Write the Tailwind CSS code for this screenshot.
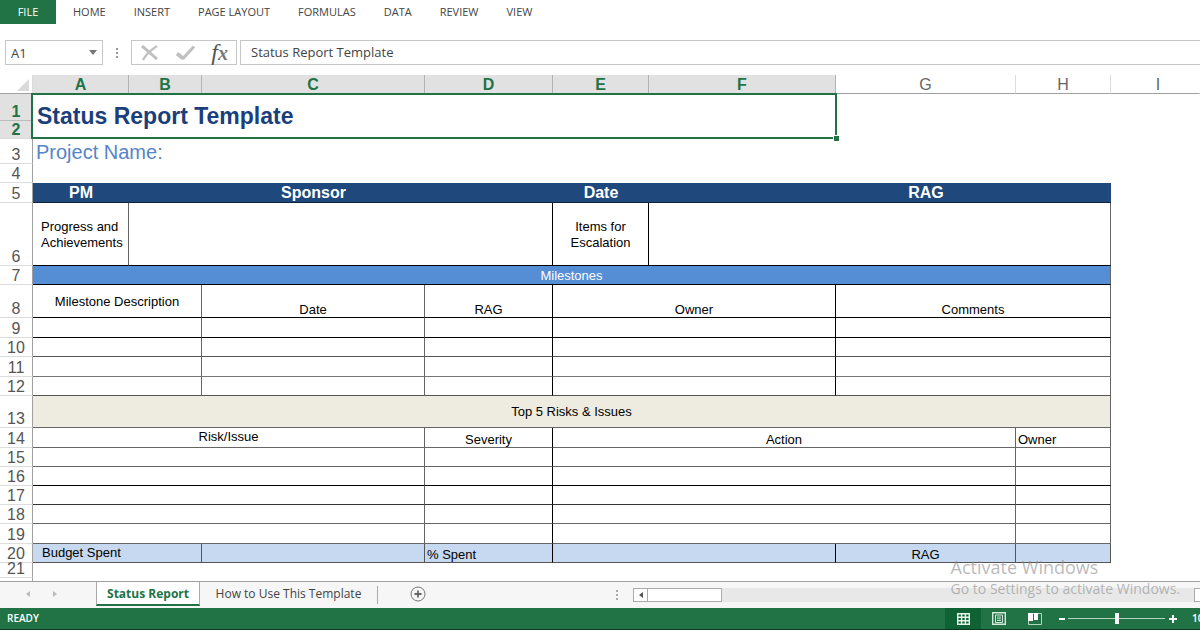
<!DOCTYPE html>
<html lang="en">
<head>
    <title>Status Report Template</title>
    <meta charset="UTF-8">
    <meta name="viewport" content="width=device-width, initial-scale=1.0">
    <script src="https://cdn.jsdelivr.net/npm/@tailwindcss/browser@4"></script>
</head>
<body class="relative flex h-screen flex-col overflow-hidden bg-white font-['Open_Sans',sans-serif] text-[#444]">

<!-- Ribbon tabs -->
<nav class="flex h-6 shrink-0 items-center gap-7 overflow-hidden text-[11px] whitespace-nowrap">
    <button class="-mr-[11px] h-6 w-14 shrink-0 bg-[#217346] text-white">FILE</button>
    <button>HOME</button>
    <button>INSERT</button>
    <button>PAGE LAYOUT</button>
    <button>FORMULAS</button>
    <button>DATA</button>
    <button>REVIEW</button>
    <button>VIEW</button>
    <a href="#" class="-mr-[34px] ml-auto pb-1">Sign in</a>
</nav>

<!-- Name box and formula bar -->
<div class="mt-4 mb-[10px] flex h-[25px] shrink-0 items-stretch pl-[5px]">
    <div class="relative flex w-[98px] border border-[#c6c6c6]">
        <select aria-label="Name box" class="w-full appearance-none bg-white pl-[5px] text-[13px] leading-5 outline-none">
            <option>A1</option>
        </select>
        <svg class="pointer-events-none absolute top-[9px] right-[5px]" width="8" height="5" viewBox="0 0 8 5"><path d="M0 0h8L4 5z" fill="#777"/></svg>
    </div>
    <div class="flex w-7 items-center justify-center">
        <svg width="2" height="12" viewBox="0 0 2 12" fill="#999"><path d="M0 1h2v2H0zM0 5h2v2H0zM0 9h2v2H0z"/></svg>
    </div>
    <div class="flex w-[106px] items-center justify-between border border-[#c6c6c6] pr-[8px] pl-[9px]">
        <button aria-label="Cancel">
            <svg width="18" height="16" viewBox="0 0 18 16" fill="none" stroke="#c0c0c0"><path d="M1 1c5 4 10 9 15 13" stroke-width="3"/><path d="M16 1C10 5 5 9 2 15" stroke-width="2.2"/></svg>
        </button>
        <button aria-label="Enter">
            <svg width="19" height="16" viewBox="0 0 19 16" fill="none" stroke="#c0c0c0"><path d="M1 8.500l6 5" stroke-width="4"/><path d="M6.500 14L18 1.500" stroke-width="3"/></svg>
        </button>
        <button aria-label="Insert function" class="font-['Liberation_Serif',serif] text-2xl leading-5 text-[#555] italic">f<span class="text-xl leading-5 font-bold text-[#777]">x</span></button>
    </div>
    <input aria-label="Formula bar" value="Status Report Template" class="ml-[3px] min-w-0 flex-1 border border-r-0 border-[#c6c6c6] pt-px pl-[10px] text-[13px] outline-none">
</div>

<!-- Worksheet -->
<main class="min-h-0 flex-1 overflow-hidden">
    <table class="w-full table-fixed border-separate border-spacing-0 font-['Liberation_Sans',sans-serif] text-[13px] leading-[14px] text-black [&_tbody_th]:border-r [&_tbody_th]:border-b [&_tbody_th]:border-r-[#a0a0a0] [&_tbody_th]:border-b-[#dcdcdc] [&_tbody_th]:pb-[2px] [&_tbody_th]:align-bottom [&_tbody_th]:text-base [&_tbody_th]:leading-3">
        <colgroup>
            <col class="w-[33px]">
            <col class="w-[96px]">
            <col class="w-[73px]">
            <col class="w-[223px]">
            <col class="w-[128px]">
            <col class="w-[96px]">
            <col class="w-[187px]">
            <col class="w-[180px]">
            <col class="w-[95px]">
            <col>
        </colgroup>
        <thead>
        <tr class="h-[19px] text-base leading-4 [&>th]:border-r [&>th]:border-b [&>th]:border-b-[#a0a0a0] [&>th]:pt-[2px]">
            <th class="border-r-[#dcdcdc]"><svg class="mr-[3px] ml-auto block" width="12" height="12" viewBox="0 0 12 12"><path d="M12 0v12H0z" fill="#dadada"/></svg></th>
            <th class="border-r-[#b4b4b4] bg-[#e1e1e1] text-[#217346]">A</th>
            <th class="border-r-[#b4b4b4] bg-[#e1e1e1] text-[#217346]">B</th>
            <th class="border-r-[#b4b4b4] bg-[#e1e1e1] text-[#217346]">C</th>
            <th class="border-r-[#b4b4b4] bg-[#e1e1e1] text-[#217346]">D</th>
            <th class="border-r-[#b4b4b4] bg-[#e1e1e1] text-[#217346]">E</th>
            <th class="border-r-[#b4b4b4] bg-[#e1e1e1] text-[#217346]">F</th>
            <th class="border-r-[#dcdcdc] font-normal text-[#666]">G</th>
            <th class="border-r-[#dcdcdc] font-normal text-[#666]">H</th>
            <th class="border-r-transparent pl-[6px] font-normal text-[#666]">I</th>
        </tr>
        </thead>
        <tbody class="[&_th]:font-normal [&_th]:text-[#555]">
        <tr class="h-[27px]">
            <th class="border-b-[#bbb]! bg-[#e1e1e1] font-bold! text-[#217346]!">1</th>
            <td colspan="6" rowspan="2" class="relative pb-[2px] pl-1 text-[23px] leading-7 font-bold text-[#1a3f7c]">
                Status Report Template
                <!-- selection frame and fill handle -->
                <span class="absolute -top-px -right-px bottom-0 -left-[2px] border-2 border-[#217346]"></span>
                <span class="absolute -right-[3px] -bottom-[2px] size-[6px] border-t border-l border-white bg-[#217346]"></span>
            </td>
            <td colspan="3"></td>
        </tr>
        <tr class="h-[18px]">
            <th class="bg-[#e1e1e1] font-bold! text-[#217346]!">2</th>
            <td colspan="3"></td>
        </tr>
        <tr class="h-[25px]">
            <th>3</th>
            <td colspan="9" class="pl-[3px] text-xl leading-6 text-[#5585c9]">Project Name:</td>
        </tr>
        <tr class="h-[19px]">
            <th>4</th>
            <td colspan="9"></td>
        </tr>
        <tr class="h-5 text-center text-base leading-4 font-bold text-white [&>td]:border-b [&>td]:border-[#10243f] [&>td]:bg-[#1f497d]">
            <th>5</th>
            <td>PM</td>
            <td></td>
            <td>Sponsor</td>
            <td></td>
            <td>Date</td>
            <td></td>
            <td>RAG</td>
            <td></td>
        </tr>
        <tr class="h-[63px] leading-4 [&>td]:border-r [&>td]:border-b [&>td]:border-black [&>td]:pt-[2px]">
            <th>6</th>
            <td class="border-r-[#666]! pl-2">Progress and Achievements</td>
            <td colspan="3"></td>
            <td class="px-3 text-center">Items for Escalation</td>
            <td colspan="3" class="border-r-[#666]!"></td>
        </tr>
        <tr class="h-[19px]">
            <th>7</th>
            <td colspan="8" class="border-r border-b border-r-[#666] border-b-black bg-[#558ed5] pt-px text-center text-white">Milestones</td>
        </tr>
        <tr class="h-[33px] text-center [&>td]:border-r [&>td]:border-b [&>td]:border-black [&>td]:align-bottom">
            <th>8</th>
            <td colspan="2" class="border-r-[#666]! pt-[2px] align-middle!">Milestone Description</td>
            <td class="border-r-[#666]!">Date</td>
            <td>RAG</td>
            <td colspan="2">Owner</td>
            <td colspan="2" class="border-r-[#666]!">Comments</td>
        </tr>
        <tr class="h-5 [&>td]:border-r [&>td]:border-b [&>td]:border-black">
            <th>9</th>
            <td colspan="2" class="border-r-[#666]!"></td>
            <td class="border-r-[#666]!"></td>
            <td></td>
            <td colspan="2"></td>
            <td colspan="2" class="border-r-[#666]!"></td>
        </tr>
        <tr class="h-[19px] [&>td]:border-r [&>td]:border-b [&>td]:border-r-black [&>td]:border-b-[#555]">
            <th>10</th>
            <td colspan="2" class="border-r-[#666]!"></td>
            <td class="border-r-[#666]!"></td>
            <td></td>
            <td colspan="2"></td>
            <td colspan="2" class="border-r-[#666]!"></td>
        </tr>
        <tr class="h-5 [&>td]:border-r [&>td]:border-b [&>td]:border-r-black [&>td]:border-b-[#777]">
            <th>11</th>
            <td colspan="2" class="border-r-[#666]!"></td>
            <td class="border-r-[#666]!"></td>
            <td></td>
            <td colspan="2"></td>
            <td colspan="2" class="border-r-[#666]!"></td>
        </tr>
        <tr class="h-[19px] [&>td]:border-r [&>td]:border-b [&>td]:border-r-black [&>td]:border-b-[#555]">
            <th>12</th>
            <td colspan="2" class="border-r-[#666]!"></td>
            <td class="border-r-[#666]!"></td>
            <td></td>
            <td colspan="2"></td>
            <td colspan="2" class="border-r-[#666]!"></td>
        </tr>
        <tr class="h-8">
            <th>13</th>
            <td colspan="8" class="border-r border-b border-[#666] bg-[#eeece1] text-center">Top 5 Risks &amp; Issues</td>
        </tr>
        <tr class="h-5 text-center [&>td]:border-r [&>td]:border-b [&>td]:border-[#666] [&>td]:align-bottom">
            <th>14</th>
            <td colspan="3" class="pt-[2px] align-top!">Risk/Issue</td>
            <td class="border-r-black!">Severity</td>
            <td colspan="3">Action</td>
            <td class="pl-[2px] text-left">Owner</td>
        </tr>
        <tr class="h-[19px] [&>td]:border-r [&>td]:border-b [&>td]:border-[#666]">
            <th>15</th>
            <td colspan="3"></td>
            <td class="border-r-black!"></td>
            <td colspan="3"></td>
            <td></td>
        </tr>
        <tr class="h-[19px] [&>td]:border-r [&>td]:border-b [&>td]:border-r-[#666] [&>td]:border-b-black">
            <th>16</th>
            <td colspan="3"></td>
            <td class="border-r-black!"></td>
            <td colspan="3"></td>
            <td></td>
        </tr>
        <tr class="h-[19px] [&>td]:border-r [&>td]:border-b [&>td]:border-r-[#666] [&>td]:border-b-[#333]">
            <th>17</th>
            <td colspan="3"></td>
            <td class="border-r-black!"></td>
            <td colspan="3"></td>
            <td></td>
        </tr>
        <tr class="h-[19px] [&>td]:border-r [&>td]:border-b [&>td]:border-[#666]">
            <th>18</th>
            <td colspan="3"></td>
            <td class="border-r-black!"></td>
            <td colspan="3"></td>
            <td></td>
        </tr>
        <tr class="h-5 [&>td]:border-r [&>td]:border-b [&>td]:border-[#666]">
            <th>19</th>
            <td colspan="3"></td>
            <td class="border-r-black!"></td>
            <td colspan="3"></td>
            <td></td>
        </tr>
        <tr class="h-[19px] [&>td]:border-r [&>td]:border-b [&>td]:border-[#555] [&>td]:bg-[#c6d9f1] [&>td]:align-bottom">
            <th>20</th>
            <td colspan="2" class="pt-[2px] pl-[9px] align-top!">Budget Spent</td>
            <td></td>
            <td class="border-r-black! pl-[2px]">% Spent</td>
            <td colspan="2" class="border-r-black!"></td>
            <td class="text-center">RAG</td>
            <td></td>
        </tr>
        <tr class="h-[15px]">
            <th>21</th>
            <td colspan="9"></td>
        </tr>
        <tr class="h-[19px]">
            <th></th>
            <td colspan="9"></td>
        </tr>
        </tbody>
    </table>
</main>

<!-- Sheet tabs and horizontal scrollbar -->
<div class="flex h-[27px] shrink-0 items-start overflow-hidden border-t border-[#a0a0a0] bg-[#f6f6f6] text-xs whitespace-nowrap">
    <div class="flex h-6 w-24 shrink-0 items-center gap-[23px] pl-[26px]">
        <button aria-label="Previous sheet"><svg width="4" height="6" viewBox="0 0 4 6"><path d="M4 0v6L0 3z" fill="#bbb"/></svg></button>
        <button aria-label="Next sheet"><svg width="4" height="6" viewBox="0 0 4 6"><path d="M0 0v6l4-3z" fill="#bbb"/></svg></button>
    </div>
    <button class="h-6 w-[104px] shrink-0 border-x border-b-2 border-x-[#ababab] border-b-[#217346] bg-white pt-[2px] font-bold text-[#217346]">Status Report</button>
    <button class="h-6 w-[177px] shrink-0">How to Use This Template</button>
    <span class="mt-1 h-[18px] w-px bg-[#ababab]"></span>
    <button aria-label="New sheet" class="mt-1 ml-8 shrink-0">
        <svg width="16" height="16" viewBox="0 0 16 16" fill="none" stroke="#777"><circle cx="8" cy="8" r="7"/><path d="M8 4.5v7M4.5 8h7" stroke-width="1.8" stroke="#666"/></svg>
    </button>
    <div class="mt-[6px] ml-[190px] flex h-[14px] flex-1 items-stretch">
        <svg class="mt-[2px] mr-[15px] shrink-0" width="2" height="10" viewBox="0 0 2 10" fill="#aaa"><path d="M0 0h2v2H0zM0 4h2v2H0zM0 8h2v2H0z"/></svg>
        <button aria-label="Scroll left" class="flex w-[15px] shrink-0 items-center justify-center border border-[#ababab] bg-white"><svg width="4" height="6" viewBox="0 0 4 6"><path d="M4 0v6L0 3z" fill="#555"/></svg></button>
        <div class="flex flex-1 bg-[#e8e8e8]">
            <span class="w-[74px] border border-l-0 border-[#ababab] bg-white"></span>
        </div>
        <button aria-label="Scroll right" class="w-[6px] shrink-0 border border-r-0 border-[#ababab] bg-white"></button>
    </div>
</div>

<!-- Status bar -->
<footer class="flex h-[22px] shrink-0 items-stretch overflow-hidden border-b border-[#0d3820] bg-[#217346] text-[10px] text-white">
    <span class="flex flex-1 items-center pl-[7px] font-semibold">READY</span>
    <button aria-label="Normal view" class="flex w-9 items-center justify-center bg-[#0f6233]">
        <svg width="13" height="12" viewBox="0 0 13 12" fill="none" stroke="#e6f3ea" stroke-width="1.4"><path d="M.7.7h11.6v10.6H.7zM.7 4.2h11.6M.7 7.8h11.6M4.6.7v10.6M8.4.7v10.6"/></svg>
    </button>
    <button aria-label="Page layout view" class="flex w-9 items-center justify-center">
        <svg width="14" height="13" viewBox="0 0 14 13" fill="none" stroke="#d4e8da"><path d="M.7.7h12.6v11.6H.7z" stroke-width="1.4"/><path d="M3.500 3h7v7.500h-7z"/><path d="M5 5h4M5 6.800h4M5 8.500h4" stroke-width=".9"/></svg>
    </button>
    <button aria-label="Page break preview" class="flex w-9 items-center justify-center">
        <svg width="14" height="12" viewBox="0 0 14 12"><path d="M.5.5h13v11H.5z" fill="none" stroke="#b5d5c0"/><path d="M0 0h5v8H0zM6 0h4v7H6z" fill="#fff"/></svg>
    </button>
    <div class="ml-[6px] flex w-[118px] items-center">
        <button aria-label="Zoom out" class="w-[9px] shrink-0"><svg width="6" height="10" viewBox="0 0 6 10"><path d="M0 4h6v2H0z" fill="#fff"/></svg></button>
        <input type="range" aria-label="Zoom" min="0" max="100" value="50" class="h-3 min-w-0 flex-1 appearance-none bg-transparent [&::-webkit-slider-runnable-track]:h-px [&::-webkit-slider-runnable-track]:bg-[#b5d5c0] [&::-webkit-slider-thumb]:-mt-[5px] [&::-webkit-slider-thumb]:h-[11px] [&::-webkit-slider-thumb]:w-1 [&::-webkit-slider-thumb]:appearance-none [&::-webkit-slider-thumb]:bg-white">
        <button aria-label="Zoom in" class="ml-1 shrink-0"><svg width="8" height="8" viewBox="0 0 8 8"><path d="M3 0h2v3h3v2H5v3H3V5H0V3h3z" fill="#fff"/></svg></button>
    </div>
    <span class="ml-[15px] w-2 shrink-0 self-center font-semibold">100%</span>
</footer>

<!-- Activation notice over the window -->
<div class="pointer-events-none absolute right-5 bottom-[31px] text-[#8a8a8a]/60">
    <p class="text-lg leading-6">Activate Windows</p>
    <p class="text-sm leading-5">Go to Settings to activate Windows.</p>
</div>

</body>
</html>
